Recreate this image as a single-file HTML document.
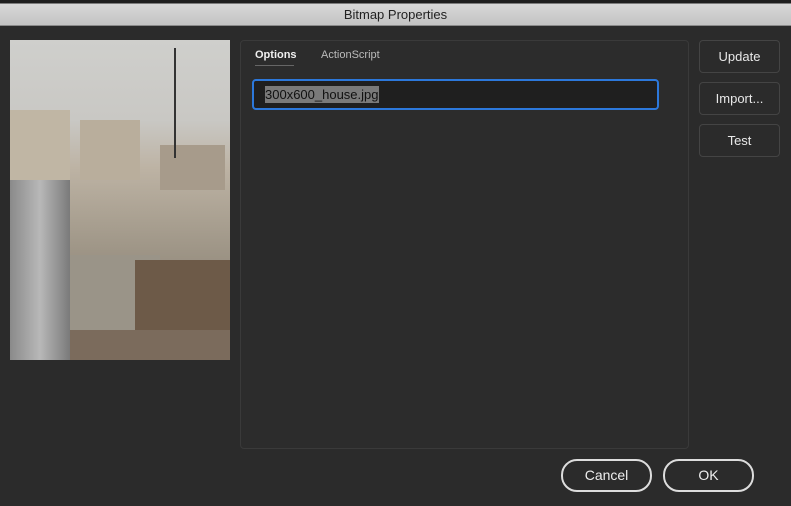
<!DOCTYPE html>
<html><head><style>
body{margin:0;width:791px;height:506px;background:#2b2b2b;position:relative;overflow:hidden;font-family:"Liberation Sans",sans-serif;color:#ddd}
.title{position:absolute;left:0;top:0;width:791px;height:25px;background:linear-gradient(#1e1e1e 0,#1e1e1e 3px,#d8d8d8 4px,#c4c4c4 24px);border-bottom:1px solid #8a8a8a;text-align:center;font-size:13px;line-height:29px;color:#222}
.img{position:absolute;left:10px;top:40px;width:220px;height:320px;overflow:hidden;background:linear-gradient(#cfcfcc 0,#c9c8c4 25%,#bdb3a4 40%,#a59c8d 60%,#8e8577 80%,#6e6258 100%)}
.panel{position:absolute;left:240px;top:40px;width:447px;height:407px;border:1px solid #3a3a3a;border-radius:4px;background:#2c2c2c}
.btn{position:absolute;left:699px;width:79px;height:31px;border:1px solid #444;border-radius:4px;text-align:center;line-height:31px;font-size:13px;color:#e8e8e8}
.pill{position:absolute;top:459px;width:87px;height:29px;border:2px solid #ddd;border-radius:16px;text-align:center;line-height:29px;font-size:14px;color:#eee}
</style></head><body>
<div class="title">Bitmap Properties</div>
<div class="img">
 <div style="position:absolute;left:0;top:70px;width:60px;height:70px;background:#c0b6a4"></div>
 <div style="position:absolute;left:70px;top:80px;width:60px;height:60px;background:#b9ae9c"></div>
 <div style="position:absolute;left:150px;top:105px;width:65px;height:45px;background:#a79b8b"></div>
 <div style="position:absolute;left:0;top:140px;width:60px;height:180px;background:linear-gradient(90deg,#8a8a8a,#b8b8b8,#7a7a7a)"></div>
 <div style="position:absolute;left:60px;top:215px;width:90px;height:75px;background:#9a9488"></div>
 <div style="position:absolute;left:125px;top:220px;width:95px;height:100px;background:#6d5a48"></div>
 <div style="position:absolute;left:60px;top:290px;width:160px;height:30px;background:#7b6b5c"></div>
 <div style="position:absolute;left:164px;top:8px;width:2px;height:110px;background:#333"></div>
</div>
<div class="panel">
 <div style="position:absolute;left:14px;top:8px;font-size:11px;color:#f0f0f0;font-weight:bold">Options</div>
 <div style="position:absolute;left:14px;top:24px;width:39px;height:1px;background:#666"></div>
 <div style="position:absolute;left:80px;top:8px;font-size:11px;color:#bbb">ActionScript</div>
 <div style="position:absolute;left:11px;top:38px;width:403px;height:27px;border:2px solid #2c78db;border-radius:4px;background:#1f1f1f">
  <span style="position:absolute;left:11px;top:5px;font-size:13px;background:#7a7a7a;color:#111;line-height:17px">300x600_house.jpg</span>
 </div>
</div>
<div class="btn" style="top:40px">Update</div>
<div class="btn" style="top:82px">Import...</div>
<div class="btn" style="top:124px">Test</div>
<div class="pill" style="left:561px">Cancel</div>
<div class="pill" style="left:663px">OK</div>
</body></html>
